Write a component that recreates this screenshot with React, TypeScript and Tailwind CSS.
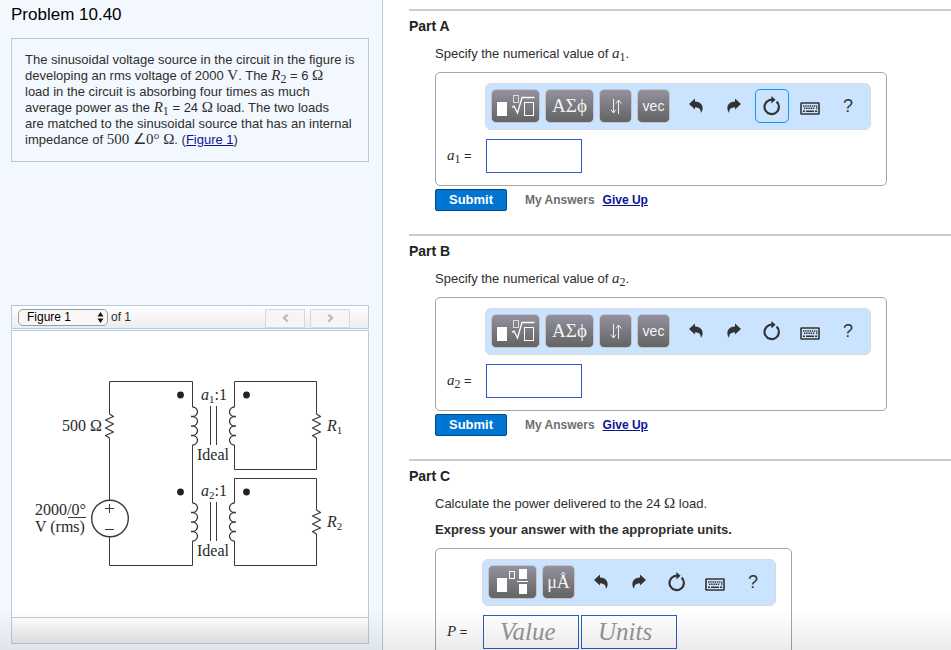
import { ReactNode, useState } from "react";

const serif = "font-['Liberation_Serif',serif]";

const Var = ({ name, sub }: { name: string; sub?: string }) => (
  <span className={`${serif} text-[15px] leading-none`}>
    <i>{name}</i>
    {sub && <sub className="text-[12px]">{sub}</sub>}
  </span>
);

const Sym = ({ children }: { children: ReactNode }) => (
  <span className={`${serif} text-[15px] leading-none`}>{children}</span>
);

const UndoIcon = () => (
  <svg width="14" height="16" viewBox="0 0 14 16" fill="#333">
    <path d="M0 6 6 0.5V3.6C11 3.6 13.6 6.6 13.6 10.2c0 2-.7 3.6-1.8 4.8.3-3.6-1.4-5.6-5.8-5.8V11.6Z" />
  </svg>
);

const RedoIcon = () => (
  <svg width="14" height="16" viewBox="0 0 14 16" fill="#333">
    <path d="M14 6 8 0.5V3.6C3 3.6.4 6.6.4 10.2c0 2 .7 3.6 1.8 4.8-.3-3.6 1.4-5.6 5.8-5.8V11.6Z" />
  </svg>
);

const ResetIcon = () => (
  <svg width="18" height="20" viewBox="0 0 18 20" fill="none">
    <path
      d="M13.6 5.6A7.2 7.2 0 1 1 6 4.2Q7.5 3.6 9.5 3.6"
      stroke="#333"
      strokeWidth="2.2"
    />
    <path d="M8.4 0 12.6 3.7 8.4 7.4Z" fill="#333" />
  </svg>
);

const KeyboardIcon = () => (
  <svg width="20" height="13" viewBox="0 0 20 13" fill="none" stroke="#333">
    <rect x="1" y="1" width="18" height="11" rx="0.5" strokeWidth="1.6" />
    <path d="M3 4h12.5M4 6.3h11" strokeWidth="1.4" strokeDasharray="1.4 0.8" />
    <path d="M16.8 3.3v4" strokeWidth="1" />
    <path d="M3 9.3h2M6 9.3h8M15 9.3h2.2" strokeWidth="1.4" />
  </svg>
);

const RootIcon = () => (
  <svg width="38" height="24" viewBox="0 0 38 24" fill="none" stroke="#fff">
    <rect x="0" y="8" width="10" height="14" fill="#fff" stroke="none" />
    <rect x="16.5" y="1.5" width="5" height="7" stroke="#ddd" />
    <path d="M15 13.5 17 12l3.5 7L25 3.5h12.5" strokeWidth="1.3" />
    <rect x="27.5" y="8.5" width="9" height="13" />
  </svg>
);

const FractionIcon = () => (
  <svg width="31" height="26" viewBox="0 0 31 26" fill="#fff">
    <rect x="0" y="9" width="10" height="14" />
    <rect x="12.5" y="2.5" width="5" height="7" fill="none" stroke="#fff" />
    <rect x="22" y="0" width="8" height="10" />
    <rect x="20" y="12" width="11" height="1" />
    <rect x="22" y="15" width="8" height="10" />
  </svg>
);

const ArrowsIcon = () => (
  <svg width="12" height="15" viewBox="0 0 12 15" fill="none" stroke="#eee">
    <path d="M3.5 0v14M0.8 10.5l2.7 3.5 2.5-3.5M8.5 15V1M11.3 4.5 8.5 1 6 4.5" />
  </svg>
);

const PadButton = ({
  label,
  wide,
  children,
}: {
  label: string;
  wide?: boolean;
  children: ReactNode;
}) => (
  <button
    type="button"
    aria-label={label}
    className={`flex h-[34px] items-center justify-center rounded-[5px] border border-[#c4c4c8] bg-gradient-to-b from-[#93919f] to-[#646464] text-[#f4f4f4] ${
      wide ? "w-[49px]" : "w-[33px]"
    }`}
  >
    {children}
  </button>
);

const IconButton = ({
  label,
  active,
  children,
}: {
  label: string;
  active?: boolean;
  children: ReactNode;
}) => (
  <button
    type="button"
    aria-label={label}
    className={`flex h-[34px] w-[34px] items-center justify-center rounded-[5px] border ${
      active ? "border-[#1d91f5]" : "border-transparent"
    }`}
  >
    {children}
  </button>
);

const Toolbar = ({
  children,
  resetActive,
}: {
  children: ReactNode;
  resetActive?: boolean;
}) => (
  <div className="flex h-[47px] w-fit items-start rounded-[6px] border border-[#d6dbe0] bg-[#cae4ff] px-[5px] pt-[5px]">
    <div className="mr-[9px] flex gap-[5px]">{children}</div>
    <div className="flex gap-1">
      <IconButton label="Undo">
        <UndoIcon />
      </IconButton>
      <IconButton label="Redo">
        <RedoIcon />
      </IconButton>
      <IconButton label="Reset" active={resetActive}>
        <ResetIcon />
      </IconButton>
      <IconButton label="Keyboard">
        <span className="pt-1">
          <KeyboardIcon />
        </span>
      </IconButton>
      <IconButton label="Help">
        <span className="text-[18px] text-[#333]">?</span>
      </IconButton>
    </div>
  </div>
);

const Part = ({ title, children }: { title: string; children: ReactNode }) => (
  <section className="border-t-2 border-[#cccccc] pt-1.5 pb-[23px]">
    <h2 className="text-[14px] leading-[18px] font-bold text-[#222]">
      {title}
    </h2>
    <div className="pt-[11px] pl-[26px]">{children}</div>
  </section>
);

const NumericPart = ({
  title,
  sub,
  resetActive,
}: {
  title: string;
  sub: string;
  resetActive?: boolean;
}) => {
  const [answer, setAnswer] = useState("");
  const id = `answer-a${sub}`;

  return (
    <Part title={title}>
      <p className="h-4 leading-4">
        Specify the numerical value of <Var name="a" sub={sub} />.
      </p>
      <form className="mt-2.5" onSubmit={(e) => e.preventDefault()}>
        <div className="w-[452px] max-w-full rounded-[5px] border border-[#a5a5a5] pt-2.5 pb-3">
          <div className="pl-[49px]">
            <Toolbar resetActive={resetActive}>
              <PadButton label="Templates" wide>
                <RootIcon />
              </PadButton>
              <PadButton label="Greek letters" wide>
                <span className={`${serif} text-[19px]`}>ΑΣϕ</span>
              </PadButton>
              <PadButton label="Arrows">
                <ArrowsIcon />
              </PadButton>
              <PadButton label="Vectors">
                <span className="text-[14px]">vec</span>
              </PadButton>
            </Toolbar>
          </div>
          <div className="mt-[9px] flex items-center pl-[11px]">
            <label htmlFor={id} className="w-[39px]">
              <Var name="a" sub={sub} /> =
            </label>
            <input
              id={id}
              type="text"
              value={answer}
              onChange={(e) => setAnswer(e.target.value)}
              className="h-[34px] w-24 border border-[#2f5bc8] bg-white px-2 outline-none"
            />
          </div>
        </div>
        <div className="mt-[3px] flex items-center text-[12px] font-bold">
          <button
            type="submit"
            className="h-[22px] w-[72px] rounded-[2px] border border-[#004b87] bg-[#0075d2] text-[13px] leading-5 text-white"
          >
            Submit
          </button>
          <span className="ml-[18px] text-[#6e6e6e]">My Answers</span>
          <a href="#give-up" className="ml-2 text-[#0a1496] underline">
            Give Up
          </a>
        </div>
      </form>
    </Part>
  );
};

const Resistor = ({ x, y }: { x: number; y: number }) => (
  <path
    d={`M${x} ${y}l4 2.5-8 3.5 8 4-8 4 8 4-8 3.5 4 2.5`}
    strokeWidth="1.3"
    strokeLinejoin="round"
  />
);

// four half turns, bulging right when sweep is 1 and left when it is 0
const Coil = ({ x, y, sweep }: { x: number; y: number; sweep: 0 | 1 }) => {
  const turn = `a5 4.75 0 0 ${sweep} 0 9.5`;
  const hook = sweep ? "h-1.5m1.5 0" : "h1.5m-1.5 0";
  return (
    <path
      d={`M${x} ${y}${turn}${hook}${turn}${hook}${turn}${hook}${turn}`}
      strokeWidth="1.3"
    />
  );
};

const Circuit = () => (
  <svg
    viewBox="12 331 356 286"
    className="block h-[286px] w-full"
    role="img"
    aria-label="Circuit with two ideal transformers"
  >
    <g fill="none" stroke="#3a3a3a" strokeWidth="1">
      <path d="M109.5 414V381.5H192.5V407M192.5 445V503M192.5 541V565.5H109.5V537M109.5 500V438" />
      <path d="M234.5 407V381.5H316.5V414M316.5 438V469.5H234.5V445" />
      <path d="M234.5 503V478.5H316.5V510M316.5 534V565.5H234.5V541" />
      <path d="M210.5 406V445M216.5 406V445M210.5 502V541M216.5 502V541" />
      <Resistor x={109.5} y={414} />
      <Resistor x={316.5} y={414} />
      <Resistor x={316.5} y={510} />
      <Coil x={192.5} y={407} sweep={1} />
      <Coil x={192.5} y={503} sweep={1} />
      <Coil x={234.5} y={407} sweep={0} />
      <Coil x={234.5} y={503} sweep={0} />
      <circle cx="110" cy="518.5" r="18.3" strokeWidth="1.4" />
      <path d="M105 508.5h9M109.5 504v9M105 529.5h9" />
      <path d="M68 517.5H86" />
    </g>
    <g fill="#222">
      <circle cx="180.5" cy="395" r="3.4" />
      <circle cx="246.5" cy="395" r="3.4" />
      <circle cx="180.5" cy="492" r="3.4" />
      <circle cx="246.5" cy="492" r="3.4" />
    </g>
    <g
      fill="#2a2a2a"
      fontSize="16"
      className="font-['Liberation_Serif',serif]"
    >
      <text x="62" y="431">500 Ω</text>
      <text x="35" y="515">2000/0°</text>
      <text x="35" y="532">V (rms)</text>
      {[
        { sub: "1", y: 400 },
        { sub: "2", y: 496 },
      ].map(({ sub, y }) => (
        <g key={sub}>
          <text x="201" y={y}>
            <tspan fontStyle="italic">a</tspan>
            <tspan dy="3" fontSize="11">{sub}</tspan>
            <tspan dy="-3">:1</tspan>
          </text>
          <text x="197" y={y + 60}>Ideal</text>
          <text x="327" y={y + 31}>
            <tspan fontStyle="italic">R</tspan>
            <tspan dy="3" fontSize="11">{sub}</tspan>
          </text>
        </g>
      ))}
    </g>
  </svg>
);

const Chevron = ({ d }: { d: string }) => (
  <svg width="7" height="8" viewBox="0 0 7 8" fill="none">
    <path d={d} stroke="#b4b4b4" strokeWidth="2" />
  </svg>
);

const FigurePanel = () => (
  <div className="mt-auto">
    <div className="flex h-6 items-center border border-[#b4cbe0] bg-gradient-to-b from-white to-[#ececec] pr-[18px] pl-1.5 text-[12px]">
      <div className="relative">
        <select
          aria-label="Figure"
          className="block h-[17px] w-[90px] appearance-none rounded-[5px] border border-[#9b9b9b] bg-[#f8f8f8] pl-2 leading-[15px] text-black"
        >
          <option>Figure 1</option>
        </select>
        <svg
          className="pointer-events-none absolute top-[3px] right-1"
          width="7"
          height="11"
          viewBox="0 0 7 11"
        >
          <path d="M3.5 0 6.5 4.5h-6ZM3.5 11l3-4.5h-6Z" fill="#111" />
        </svg>
      </div>
      <span className="ml-[3px]">of 1</span>
      <div className="ml-auto flex gap-[5px] pt-0.5">
        <button
          type="button"
          disabled
          aria-label="Previous figure"
          className="flex h-[19px] w-10 items-center justify-center border border-[#d9d9d9] bg-[#f5f5f5]"
        >
          <Chevron d="M5.5 0.5 2 4l3.5 3.5" />
        </button>
        <button
          type="button"
          disabled
          aria-label="Next figure"
          className="flex h-[19px] w-10 items-center justify-center border border-[#d9d9d9] bg-[#f5f5f5]"
        >
          <Chevron d="M1.5 0.5 5 4 1.5 7.5" />
        </button>
      </div>
    </div>
    <div className="mt-px border border-[#b4cbe0] bg-white">
      <Circuit />
      <div className="h-[26px] border-t border-[#b4cbe0] bg-gradient-to-b from-white to-[#ebebeb]" />
    </div>
  </div>
);

const PowerPart = () => {
  const [value, setValue] = useState("");
  const [units, setUnits] = useState("");
  const field = `h-[34px] w-24 border border-[#2f5bc8] bg-white px-4 text-[25px] italic outline-none placeholder:text-[#969696] ${serif}`;

  return (
    <Part title="Part C">
      <p className="h-4 leading-4">
        Calculate the power delivered to the 24 <Sym>Ω</Sym> load.
      </p>
      <p className="mt-2.5 leading-4 font-bold">
        Express your answer with the appropriate units.
      </p>
      <form
        className="mt-2.5 w-[357px] max-w-full rounded-[5px] border border-[#a5a5a5] pt-2.5 pb-3"
        onSubmit={(e) => e.preventDefault()}
      >
        <div className="pl-[46px]">
          <Toolbar>
            <PadButton label="Templates" wide>
              <FractionIcon />
            </PadButton>
            <PadButton label="Units">
              <span className={`${serif} text-[18px]`}>μÅ</span>
            </PadButton>
          </Toolbar>
        </div>
        <div className="mt-[9px] flex items-center pl-[11px]">
          <label htmlFor="power-value" className="w-9">
            <Var name="P" /> =
          </label>
          <input
            id="power-value"
            type="text"
            placeholder="Value"
            value={value}
            onChange={(e) => setValue(e.target.value)}
            className={field}
          />
          <input
            type="text"
            aria-label="Units"
            placeholder="Units"
            value={units}
            onChange={(e) => setUnits(e.target.value)}
            className={`ml-0.5 ${field}`}
          />
        </div>
      </form>
    </Part>
  );
};

const App = () => {
  return (
    <div className="relative flex h-screen overflow-hidden bg-white font-['Liberation_Sans',Arial,sans-serif] text-[13px] text-[#2e2e2e]">
      <aside className="flex w-[383px] shrink-0 flex-col border-r border-[#b4cbe0] bg-[#f3f8ff] pt-[5px] pr-[13px] pb-1.5 pl-[11px]">
        <h1 className="text-[17px] leading-5 text-black">Problem 10.40</h1>
        <div className="mt-[13px] border border-[#b4cbe0] p-[13px]">
          <p className="leading-4">
            The sinusoidal voltage source in the circuit in the figure is
            developing an rms voltage of 2000 <Sym>V</Sym>. The{" "}
            <Var name="R" sub="2" /> = 6 <Sym>Ω</Sym>
            <br />
            load in the circuit is absorbing four times as much
            <br />
            average power as the <Var name="R" sub="1" /> = 24 <Sym>Ω</Sym>{" "}
            load. The two loads
            <br />
            are matched to the sinusoidal source that has an internal
            <br />
            impedance of <Sym>500 ∠0° Ω</Sym>. (
            <a href="#figure" className="text-[#0a1496] underline">
              Figure 1
            </a>
            )
          </p>
        </div>
        <FigurePanel />
      </aside>
      <main className="min-w-0 flex-1 pt-[9px] pl-[26px]">
        <NumericPart title="Part A" sub="1" resetActive />
        <NumericPart title="Part B" sub="2" />
        <PowerPart />
      </main>
      <div className="pointer-events-none absolute inset-x-0 bottom-0 h-10 bg-gradient-to-b from-transparent to-black/8" />
    </div>
  );
};

export default App;
